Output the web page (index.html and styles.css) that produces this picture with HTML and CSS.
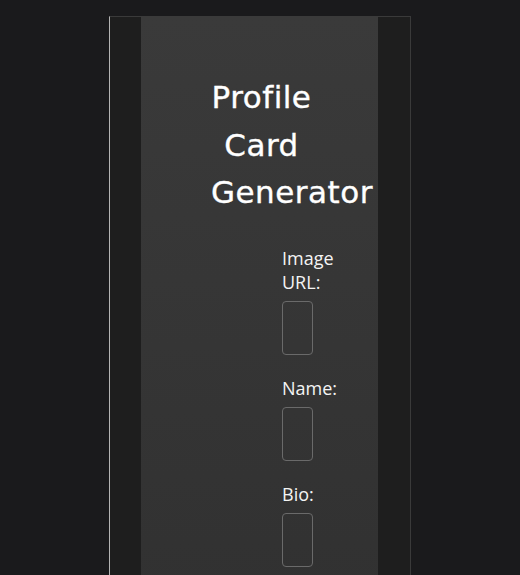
FILE: index.html
```html
<!DOCTYPE html>
<html lang="en">
<head>
<meta charset="utf-8">
<title>Profile Card Generator</title>
<link rel="stylesheet" href="styles.css">
</head>
<body>
<main class="frame">
  <section class="panel">
    <h1 class="title">Profile Card Generator</h1>
    <form class="form">
      <label class="label" for="img">Image URL:</label>
      <input class="field" id="img" type="text">
      <label class="label" for="name">Name:</label>
      <input class="field" id="name" type="text">
      <label class="label" for="bio">Bio:</label>
      <input class="field" id="bio" type="text">
    </form>
  </section>
</main>
</body>
</html>
```
FILE: styles.css
```css
html, body {
  margin: 0;
  padding: 0;
  background: #1a1a1c;
  height: 100%;
  overflow: hidden;
}
.frame {
  margin: 16px 0 0 109px;
  min-height: 600px;
  box-sizing: content-box;
  border: 1px solid #3a3a3a;
  border-left-color: #b4b4b4;
  background: #1e1e1e;
  padding: 0 32px 0 31px;
  width: 237px;
  display: flex;
}
.panel {
  flex: 1;
  background: linear-gradient(#3a3a3a, #303030);
  min-height: 600px;
  padding-top: 57px;
}
.title {
  margin: 0 0 29px 70px;
  width: 101px;
  text-align: center;
  font-family: "DejaVu Sans", sans-serif;
  font-weight: 400;
  font-size: 31px;
  letter-spacing: 0.5px;
  line-height: 47.5px;
  color: #ffffff;
  -webkit-text-stroke: 0.35px #ffffff;
}
.form {
  margin-left: 141px;
  width: 60px;
  display: flex;
  flex-direction: column;
  align-items: flex-start;
}
.label {
  font-family: "Open Sans", sans-serif;
  font-size: 18px;
  line-height: 24px;
  color: #f4f4f4;
}
.field {
  margin: 7px 0 21px;
  width: 31px;
  height: 54px;
  box-sizing: border-box;
  border: 1px solid #6a6a6a;
  border-radius: 4px;
  background: transparent;
  padding: 0;
}
```
